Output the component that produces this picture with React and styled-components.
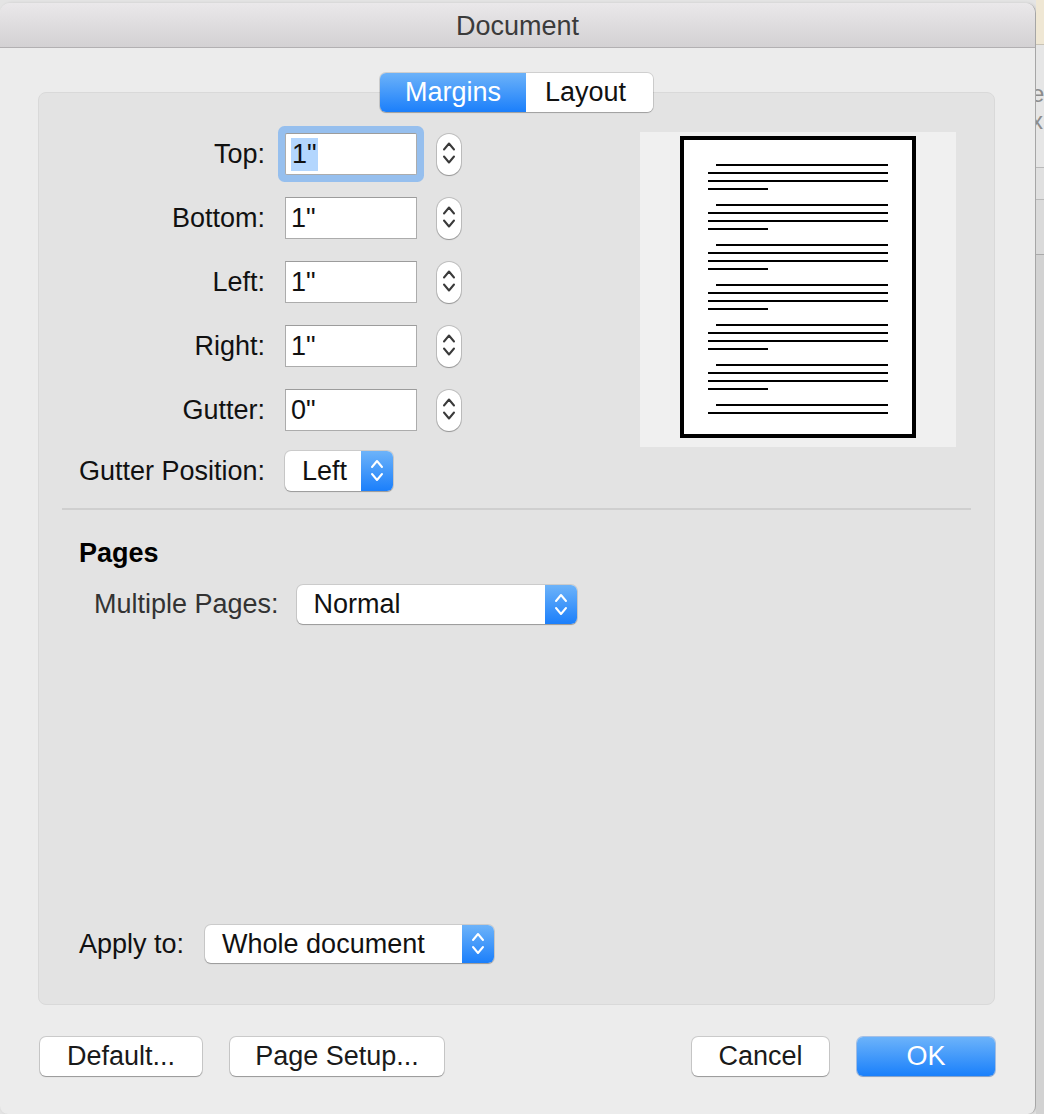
import styled, { createGlobalStyle } from 'styled-components'

const GlobalStyle = createGlobalStyle`
  html, body {
    margin: 0;
    padding: 0;
  }
  body {
    font-family: "Liberation Sans", Arial, sans-serif;
    background: #e4e4e4;
  }
`

const Screen = styled.div`
  display: flex;
  align-items: flex-start;
  width: 1044px;
  height: 1114px;
  overflow: hidden;
  background: #e4e4e4;
`

const Window = styled.div`
  width: 1036px;
  height: 1111px;
  margin-top: 3px;
  flex-shrink: 0;
  box-sizing: border-box;
  display: flex;
  flex-direction: column;
  background: #ececec;
  border-right: 1px solid #a6a6a6;
  border-radius: 10px 10px 8px 8px;
  overflow: hidden;
  box-shadow: 1px 0 3px rgba(0, 0, 0, 0.12);
`

const TitleBar = styled.div`
  height: 45px;
  box-sizing: border-box;
  padding-top: 3px;
  flex-shrink: 0;
  display: flex;
  align-items: center;
  justify-content: center;
  background: linear-gradient(#eae8ea, #d3d1d3);
  border-bottom: 1px solid #b2b0b2;
  font-size: 27px;
  color: #3b3b3b;
`

const Body = styled.div`
  display: flex;
  flex-direction: column;
  padding: 25px 40px 0 38px;
`

const Tabs = styled.div`
  align-self: center;
  display: flex;
  height: 39px;
  margin-bottom: -20px;
  position: relative;
  z-index: 1;
  border-radius: 6px;
  box-shadow: 0 0 0 1px rgba(0, 0, 0, 0.12), 0 1px 1px rgba(0, 0, 0, 0.2);
`

const Tab = styled.div`
  width: ${p => p.$width}px;
  box-sizing: border-box;
  display: flex;
  align-items: center;
  justify-content: center;
  font-size: 27px;
  color: ${p => (p.$active ? '#fff' : '#111')};
  background: ${p => (p.$active ? 'linear-gradient(#6cb2f9, #1b7ffb)' : '#fff')};
  &:first-child {
    border-radius: 6px 0 0 6px;
  }
  &:last-child {
    border-radius: 0 6px 6px 0;
    padding-right: 8px;
  }
`

const Panel = styled.div`
  height: 913px;
  box-sizing: border-box;
  display: flex;
  flex-direction: column;
  padding: 40px 23px 41px;
  background: #e3e3e3;
  border: 1px solid #d9d9d9;
  border-radius: 8px;
`

const TopSection = styled.div`
  display: flex;
  justify-content: space-between;
  align-items: flex-start;
  padding: 0 15px 0 17px;
`

const FormGrid = styled.div`
  display: grid;
  grid-template-columns: 186px 132px 24px;
  grid-template-rows: repeat(5, 42px) 36px;
  column-gap: 20px;
  row-gap: 22px;
  align-items: center;
`

const Label = styled.div`
  font-size: 27px;
  color: ${p => (p.$muted ? '#333' : '#111')};
  text-align: right;
  white-space: nowrap;
`

const Field = styled.div`
  width: 132px;
  height: 42px;
  box-sizing: border-box;
  display: flex;
  align-items: center;
  padding-left: 5px;
  background: #fff;
  border: 1px solid #acacac;
  border-top-color: #9c9c9c;
  border-radius: ${p => (p.$focused ? '2px' : '0')};
  box-shadow: ${p => (p.$focused ? '0 0 0 7px #96bfee' : 'none')};
  font-size: 27px;
  color: #111;
`

const Selection = styled.span`
  background: #b3d6fe;
  line-height: 33px;
  padding: 0 1px;
`

const StepperBox = styled.div`
  width: 24px;
  height: 41px;
  background: #fff;
  border-radius: 12px;
  box-shadow: 0 0 0 1px rgba(0, 0, 0, 0.16), 0 1px 1px rgba(0, 0, 0, 0.22);
  display: flex;
`

const SelectBox = styled.div`
  width: ${p => p.$width}px;
  height: ${p => p.$height || 39}px;
  display: flex;
  background: #fff;
  border-radius: 6px;
  box-shadow: 0 0 0 1px rgba(0, 0, 0, 0.1), 0 1px 1px rgba(0, 0, 0, 0.25);
  font-size: 27px;
  color: #111;
`

const SelectValue = styled.div`
  flex: 1;
  display: flex;
  align-items: center;
  padding-left: 17px;
  white-space: nowrap;
`

const SelectArrow = styled.div`
  width: 32px;
  display: flex;
  align-items: center;
  justify-content: center;
  background: linear-gradient(#6db3f9, #1b7ffb);
  border-radius: 0 6px 6px 0;
`

const PreviewBox = styled.div`
  width: 316px;
  height: 315px;
  margin-top: -1px;
  background: #f0f0f0;
`

const Separator = styled.div`
  height: 2px;
  margin-top: 19px;
  background: #cfcfcf;
`

const PagesSection = styled.div`
  padding: 0 17px;
`

const Heading = styled.div`
  margin-top: 27px;
  font-size: 27px;
  line-height: 32px;
  font-weight: bold;
  color: #000;
`

const InlineRow = styled.div`
  display: flex;
  align-items: center;
  gap: ${p => p.$gap}px;
  margin-top: ${p => p.$top || 0}px;
  padding-left: ${p => p.$indent}px;
`

const Spacer = styled.div`
  flex: 1;
`

const ButtonBar = styled.div`
  display: flex;
  justify-content: space-between;
  margin-top: 32px;
  padding-left: 2px;
`

const ButtonGroup = styled.div`
  display: flex;
  gap: 28px;
`

const Button = styled.button`
  width: ${p => p.$width}px;
  height: 39px;
  padding: 0;
  font-family: "Liberation Sans", Arial, sans-serif;
  font-size: 27px;
  color: ${p => (p.$primary ? '#fff' : '#1a1a1a')};
  background: ${p => (p.$primary ? 'linear-gradient(#6cb3fa, #1a80fb)' : '#fff')};
  border: none;
  border-radius: 6px;
  box-shadow: ${p =>
    p.$primary
      ? '0 0 0 1px rgba(30, 110, 220, 0.35), 0 1px 1px rgba(0, 0, 0, 0.2)'
      : '0 0 0 1px rgba(0, 0, 0, 0.14), 0 1px 1px rgba(0, 0, 0, 0.25)'};
`

const Backdrop = styled.div`
  flex: 1;
  height: 100%;
  display: flex;
  flex-direction: column;
  overflow: hidden;
  background: #d2d2d2;
`

const Band = styled.div`
  height: ${p => p.$height}px;
  flex-shrink: 0;
  background: ${p => p.$color};
  border-bottom: 1px solid ${p => p.$line || 'transparent'};
  font-size: 24px;
  color: #8c8c8c;
  overflow: hidden;
`

const Glyph = styled.div`
  height: 26px;
  line-height: 26px;
  margin-left: -5px;
  margin-top: ${p => p.$top}px;
`

const Chevrons = ({ color, width, height, top }) => (
  <svg width={width} height={height} viewBox={`0 0 ${width} ${height}`}>
    <g fill="none" stroke={color} strokeWidth="2" strokeLinecap="round" strokeLinejoin="round">
      <path d={`M${width / 2 - 5} ${top + 6} L${width / 2} ${top} L${width / 2 + 5} ${top + 6}`} />
      <path d={`M${width / 2 - 5} ${top + 13} L${width / 2} ${top + 19} L${width / 2 + 5} ${top + 13}`} />
    </g>
  </svg>
)

const Stepper = () => (
  <StepperBox>
    <Chevrons color="#3a3a3a" width={24} height={41} top={9.5} />
  </StepperBox>
)

const Select = ({ value, width, height }) => (
  <SelectBox $width={width} $height={height}>
    <SelectValue>{value}</SelectValue>
    <SelectArrow>
      <Chevrons color="#fff" width={20} height={26} top={3} />
    </SelectArrow>
  </SelectBox>
)

const paragraphs = [0, 1, 2, 3, 4, 5, 6]

const PagePreview = () => (
  <PreviewBox>
    <svg width="316" height="315" viewBox="0 0 316 315">
      <rect x="42" y="6" width="232" height="298" fill="#fff" stroke="#000" strokeWidth="4" />
      <g stroke="#000" strokeWidth="2">
        {paragraphs.map(i => {
          const y = 33 + i * 40
          const last = i === paragraphs.length - 1
          return (
            <g key={i}>
              <line x1="76" y1={y} x2="248" y2={y} />
              <line x1="68" y1={y + 8} x2="248" y2={y + 8} />
              {!last && <line x1="68" y1={y + 16} x2="248" y2={y + 16} />}
              {!last && <line x1="68" y1={y + 24} x2="128" y2={y + 24} />}
            </g>
          )
        })}
      </g>
    </svg>
  </PreviewBox>
)

const margins = [
  { label: 'Top:', value: '1"', focused: true },
  { label: 'Bottom:', value: '1"' },
  { label: 'Left:', value: '1"' },
  { label: 'Right:', value: '1"' },
  { label: 'Gutter:', value: '0"' },
]

export default function App() {
  return (
    <>
      <GlobalStyle />
      <Screen>
        <Window>
          <TitleBar>Document</TitleBar>
          <Body>
            <Tabs>
              <Tab $active $width={146}>Margins</Tab>
              <Tab $width={127}>Layout</Tab>
            </Tabs>
            <Panel>
              <TopSection>
                <FormGrid>
                  {margins.map(m => (
                    <Row key={m.label} {...m} />
                  ))}
                  <Label>Gutter Position:</Label>
                  <Select value="Left" width={108} height={40} />
                </FormGrid>
                <PagePreview />
              </TopSection>
              <Separator />
              <PagesSection>
                <Heading>Pages</Heading>
                <InlineRow $gap={18} $top={16} $indent={15}>
                  <Label $muted>Multiple Pages:</Label>
                  <Select value="Normal" width={280} />
                </InlineRow>
              </PagesSection>
              <Spacer />
              <InlineRow $gap={21} $indent={17}>
                <Label>Apply to:</Label>
                <Select value="Whole document" width={289} height={38} />
              </InlineRow>
            </Panel>
            <ButtonBar>
              <ButtonGroup>
                <Button $width={162}>Default...</Button>
                <Button $width={214}>Page Setup...</Button>
              </ButtonGroup>
              <ButtonGroup>
                <Button $width={137}>Cancel</Button>
                <Button $primary $width={138}>OK</Button>
              </ButtonGroup>
            </ButtonBar>
          </Body>
        </Window>
        <Backdrop>
          <Band $height={44} $color="#efe7d4" $line="#c9c3b5" />
          <Band $height={122} $color="#e6e6e6" $line="#b9b9b9">
            <Glyph $top={36}>e</Glyph>
            <Glyph $top={1}>x</Glyph>
          </Band>
          <Band $height={31} $color="#e0e0e0" $line="#b9b9b9" />
          <Band $height={54} $color="#dadada" $line="#a9a9a9" />
        </Backdrop>
      </Screen>
    </>
  )
}

function Row({ label, value, focused }) {
  return (
    <>
      <Label>{label}</Label>
      <Field $focused={focused}>
        {focused ? <Selection>{value}</Selection> : value}
      </Field>
      <Stepper />
    </>
  )
}
